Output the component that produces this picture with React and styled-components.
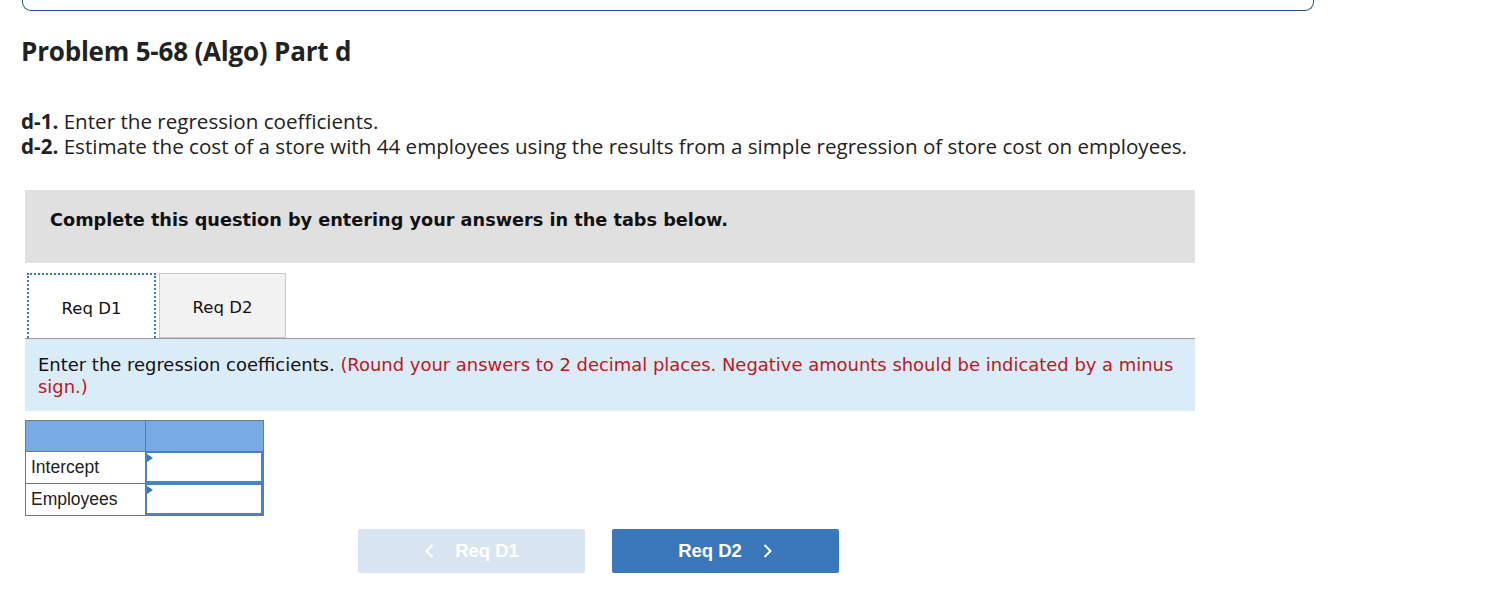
import styled, { createGlobalStyle } from "styled-components"
import { useState } from "react"

const GlobalStyle = createGlobalStyle`
  html, body {
    margin: 0;
    padding: 0;
    background: #fff;
  }
  body {
    font-family: "Open Sans", "Liberation Sans", sans-serif;
    color: #222;
  }
`

function App() {
  const [tab, setTab] = useState(0)
  const [values, setValues] = useState({ intercept: "", employees: "" })

  //update one of the answer cells
  function handleChange(e) {
    setValues({ ...values, [e.target.name]: e.target.value })
  }

  return (
    <>
      <GlobalStyle />
      <Page>
        <TopFrame />
        <Title>Problem 5-68 (Algo) Part d</Title>
        <Parts>
          <p><b>d-1.</b> Enter the regression coefficients.</p>
          <p><b>d-2.</b> Estimate the cost of a store with 44 employees using the results from a simple regression of store cost on employees.</p>
        </Parts>

        <Notice>Complete this question by entering your answers in the tabs below.</Notice>

        <TabRow>
          <Tab active={tab === 0} onClick={() => setTab(0)}>Req D1</Tab>
          <Tab active={tab === 1} onClick={() => setTab(1)}>Req D2</Tab>
        </TabRow>

        <Instructions>
          Enter the regression coefficients.{" "}
          <Red>(Round your answers to 2 decimal places. Negative amounts should be indicated by a minus sign.)</Red>
        </Instructions>

        <Table>
          <tbody>
            <tr>
              <HeadCell />
              <HeadCell />
            </tr>
            <tr>
              <LabelCell>Intercept</LabelCell>
              <InputCell>
                <Answer name="intercept" value={values.intercept} onChange={handleChange} />
              </InputCell>
            </tr>
            <tr>
              <LabelCell>Employees</LabelCell>
              <InputCell>
                <Answer name="employees" value={values.employees} onChange={handleChange} />
              </InputCell>
            </tr>
          </tbody>
        </Table>

        <NavRow>
          <NavButton disabled>
            <Chevron viewBox="0 0 10 16"><path d="M8 2 L2 8 L8 14" /></Chevron>
            Req D1
          </NavButton>
          <NavButton primary onClick={() => setTab(1)}>
            Req D2
            <Chevron viewBox="0 0 10 16"><path d="M2 2 L8 8 L2 14" /></Chevron>
          </NavButton>
        </NavRow>
      </Page>
    </>
  )
}

export default App


//Style section

const Page = styled.div`
  width: 1503px;
  height: 613px;
  overflow: hidden;
  box-sizing: border-box;
`

const TopFrame = styled.div`
  margin: -20px 0 0 22px;
  width: 1290px;
  height: 30px;
  border: 1.5px solid #1f4f8e;
  border-top: none;
  border-radius: 0 0 9px 9px;
`

const Title = styled.h1`
  margin: 25px 0 0 21px;
  font-size: 26px;
  font-weight: 700;
  color: #222;
  line-height: 30px;
  letter-spacing: -0.2px;
`

const Parts = styled.div`
  margin: 43px 0 0 21px;
  font-size: 20.6px;
  line-height: 25px;
  color: #222;
  p {
    margin: 0;
  }
  b {
    font-weight: 700;
  }
`

const Notice = styled.div`
  margin: 31px 0 0 25px;
  width: 1170px;
  height: 73px;
  box-sizing: border-box;
  background: #e0e0e0;
  padding: 20px 0 0 25px;
  font-family: "DejaVu Sans", Verdana, sans-serif;
  font-weight: 700;
  font-size: 17.7px;
  color: #111;
`

const TabRow = styled.div`
  margin: 10px 0 0 25px;
  width: 1170px;
  display: flex;
  gap: 3px;
  padding-left: 2px;
  box-sizing: border-box;
  border-bottom: 1px solid #999;
`

const Tab = styled.button`
  width: ${p => (p.active ? "129px" : "127px")};
  height: 65px;
  box-sizing: border-box;
  margin-bottom: ${p => (p.active ? "-1px" : "0")};
  background: ${p => (p.active ? "#fff" : "#f2f2f2")};
  border: ${p => (p.active ? "2px dotted #3a77bb" : "1px solid #c8c8c8")};
  border-bottom: ${p => (p.active ? "none" : "1px solid #c8c8c8")};
  font-family: "DejaVu Sans", Verdana, sans-serif;
  font-size: 16.5px;
  color: #111;
  cursor: pointer;
  padding: 4px 0 0;
`

const Instructions = styled.div`
  margin: 0 0 0 25px;
  width: 1170px;
  min-height: 72px;
  box-sizing: border-box;
  background: #dbecf9;
  padding: 15px 20px 8px 13px;
  font-family: "DejaVu Sans", Verdana, sans-serif;
  font-size: 17.95px;
  line-height: 22px;
  color: #111;
`

const Red = styled.span`
  color: #c0161c;
`

const Table = styled.table`
  margin: 9px 0 0 25px;
  border-collapse: collapse;
  font-family: "Liberation Sans", Arial, sans-serif;
  font-size: 17.5px;
`

const HeadCell = styled.td`
  background: #78abe3;
  border: 1px solid #777;
  height: 30px;
  padding: 0;
  &:first-child {
    width: 119px;
  }
  &:last-child {
    width: 117px;
  }
`

const LabelCell = styled.td`
  border: 1px solid #777;
  height: 30px;
  padding: 0 5px;
  color: #222;
`

const InputCell = styled.td`
  border: 1px solid #777;
  padding: 0;
  position: relative;
  &::before {
    content: "";
    position: absolute;
    left: 1px;
    top: 2px;
    border-top: 4px solid transparent;
    border-bottom: 4px solid transparent;
    border-left: 6px solid #3a77bb;
  }
`

const Answer = styled.input`
  display: block;
  width: 117px;
  height: 31px;
  box-sizing: border-box;
  border: 2px solid #4a84c6;
  border-top-width: 1px;
  border-left-width: 1px;
  outline: none;
  font-family: "Liberation Sans", Arial, sans-serif;
  font-size: 15px;
  text-align: right;
  padding: 0 4px;
`

const NavRow = styled.div`
  margin: 13px 0 0 358px;
  display: flex;
  gap: 27px;
`

const NavButton = styled.button`
  width: 227px;
  height: 44px;
  border: none;
  border-radius: 2px;
  background: ${p => (p.primary ? "#3a77bb" : "#d8e4f1")};
  color: #fff;
  font-family: "Liberation Sans", Arial, sans-serif;
  font-weight: 700;
  font-size: 18.5px;
  display: flex;
  align-items: center;
  justify-content: center;
  gap: 20px;
  cursor: ${p => (p.disabled ? "default" : "pointer")};
  padding: 0;
`

const Chevron = styled.svg`
  width: 11px;
  height: 16px;
  fill: none;
  stroke: #fff;
  stroke-width: 2;
`
